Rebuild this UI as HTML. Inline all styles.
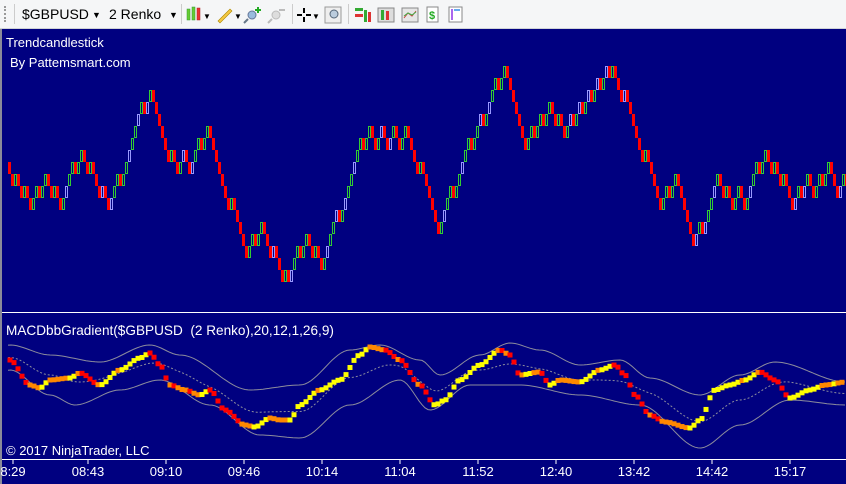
<!DOCTYPE html>
<html><head><meta charset="utf-8"><style>
html,body{margin:0;padding:0}
body{width:846px;height:484px;overflow:hidden;background:#000080;position:relative;font-family:"Liberation Sans",sans-serif}
#tb{position:absolute;left:0;top:0;width:846px;height:28px;background:#f5f6f7;border-bottom:1px solid #cfd3d8}
.t{position:absolute;font-size:14px;color:#000;top:6px}
.lbl{position:absolute;color:#fff;font-size:13px}
</style></head><body>
<div id="tb">
<div style="position:absolute;left:4px;top:6px;width:0;height:16px;border-left:2px dotted #999"></div>
<div style="position:absolute;left:14px;top:4px;width:1px;height:20px;background:#ccc"></div>
<div class="t" style="left:22px">$GBPUSD</div><div class="t" style="left:92px;font-size:9px;top:10px">▼</div>
<div class="t" style="left:109px">2 Renko</div><div class="t" style="left:169px;font-size:9px;top:10px">▼</div>
<div style="position:absolute;left:181px;top:4px;width:1px;height:20px;background:#ccc"></div>
<svg style="position:absolute;left:0;top:0" width="846" height="28">
<rect x="187" y="9" width="3" height="11" fill="#6c3" stroke="#393" stroke-width=".5"/><rect x="192" y="7" width="3" height="13" fill="#6c3" stroke="#393" stroke-width=".5"/><rect x="197" y="8" width="3" height="12" fill="#e33" stroke="#a22" stroke-width=".5"/>
<text x="203" y="19" font-size="8" font-family="Liberation Sans">▼</text>
<path d="M218 21 L230 9 L232 11 L220 23 Z" fill="#f5c842" stroke="#a80" stroke-width=".6"/>
<text x="234" y="19" font-size="8" font-family="Liberation Sans">▼</text>
<circle cx="252" cy="15" r="4" fill="#9bd" stroke="#679"/><path d="M248 19 l-4 4" stroke="#678" stroke-width="2"/><path d="M258 7v6M255 10h6" stroke="#2a2" stroke-width="2"/>
<circle cx="276" cy="15" r="4" fill="#ddd" stroke="#bbb"/><path d="M272 19 l-4 4" stroke="#bbb" stroke-width="2"/><path d="M279 10h6" stroke="#bbb" stroke-width="2"/>
<rect x="292" y="4" width="1" height="20" fill="#ccc"/>
<path d="M304 8v5M304 17v5M297 15h5M306 15h5" stroke="#000" stroke-width="2"/>
<text x="312" y="19" font-size="8" font-family="Liberation Sans">▼</text>
<rect x="325" y="7" width="16" height="16" fill="#eee" stroke="#999"/><circle cx="334" cy="14" r="4" fill="#bcd" stroke="#567"/>
<rect x="348" y="4" width="1" height="20" fill="#ccc"/>
<rect x="355" y="8" width="8" height="3" fill="#3a3"/><rect x="355" y="14" width="8" height="3" fill="#d33"/><rect x="364" y="10" width="3" height="12" fill="#3a3"/><rect x="368" y="12" width="3" height="10" fill="#d33"/>
<rect x="378" y="8" width="16" height="14" fill="#ddd" stroke="#888"/><rect x="381" y="10" width="3" height="10" fill="#3a3"/><rect x="386" y="11" width="3" height="9" fill="#d33"/>
<rect x="402" y="8" width="16" height="14" fill="#e6e6e6" stroke="#888"/><path d="M404 18l4-5 4 3 4-5" stroke="#c44" fill="none"/><path d="M404 16l4-3 4 2 4-3" stroke="#4a4" fill="none"/>
<rect x="427" y="7" width="11" height="15" fill="#fff" stroke="#888"/><text x="429" y="19" font-size="11" fill="#2a2" font-weight="bold" font-family="Liberation Sans">$</text>
<rect x="449" y="7" width="13" height="15" fill="#fff" stroke="#888"/><rect x="451" y="9" width="2" height="11" fill="#a6e"/><rect x="454" y="9" width="6" height="2" fill="#6ae"/>
</svg>
</div>
<div style="position:absolute;left:0;top:29px;width:2px;height:455px;background:#8a8a9a"></div>
<div class="lbl" style="left:6px;top:35px">Trendcandlestick</div>
<div class="lbl" style="left:10px;top:55px">By Pattemsmart.com</div>
<div style="position:absolute;left:2px;top:312px;width:844px;height:1px;background:#fff"></div>
<div class="lbl" style="left:6px;top:323px;font-size:13.6px">MACDbbGradient($GBPUSD&nbsp; (2 Renko),20,12,1,26,9)</div>
<div class="lbl" style="left:6px;top:443px">© 2017 NinjaTrader, LLC</div>
<div style="position:absolute;left:2px;top:459px;width:844px;height:1px;background:#fff"></div>
<svg id="c" style="position:absolute;left:0;top:0" width="846" height="484"></svg>
<script>
function interp(pts,x){for(var i=0;i<pts.length-1;i++){if(x<=pts[i+1][0]){var a=pts[i],b=pts[i+1];var u=(x-a[0])/(b[0]-a[0]);u=u*u*(3-2*u);return a[1]+(b[1]-a[1])*u;}}return pts[pts.length-1][1];}
var P=[[8,165],[20,200],[30,205],[45,165],[55,195],[75,155],[100,200],[120,170],[135,100],[150,100],[165,165],[185,160],[205,130],[215,165],[230,215],[245,260],[260,235],[270,265],[285,285],[300,240],[320,255],[335,210],[355,135],[380,130],[400,135],[415,170],[435,235],[450,180],[470,130],[495,80],[500,75],[510,110],[525,150],[540,105],[555,130],[570,130],[580,100],[600,80],[608,62],[620,100],[635,150],[660,210],[675,180],[690,250],[700,225],[715,160],[730,200],[745,190],[760,155],[780,185],[790,225],[805,175],[815,200],[825,165],[835,200],[846,170]];
var s='';var p=162,prevUp=false,run=0;
for(var x=8;x<846;x+=3){var t=interp(P,x);var up;
if(t<p-8)up=true;else if(t>p+8)up=false;else{up=run>=2?!prevUp:prevUp;}
if(up===prevUp)run++;else run=1;
if(up){var c=(x%9<3)?'#99f':'#3c3';s+='<rect x="'+(x+.5)+'" y="'+(p-11.5)+'" width="2" height="11" fill="none" stroke="'+c+'"/>';p-=12;}
else{s+='<rect x="'+x+'" y="'+p+'" width="3" height="12" fill="#f00"/>';p+=12;}
prevUp=up;}
var D=[[10,360],[30,385],[40,388],[50,380],[70,378],[80,373],[100,385],[120,370],[140,358],[150,353],[160,365],[170,385],[185,390],[200,395],[210,390],[225,410],[245,425],[255,427],[270,418],[280,420],[290,420],[300,405],[320,390],[340,380],[360,355],[370,347],[385,350],[400,360],[420,385],[435,405],[445,400],[460,380],[480,365],[500,350],[510,355],[520,375],[540,372],[550,385],[560,380],[580,382],[600,370],[615,365],[625,375],[635,395],[650,415],[665,422],[690,428],[700,420],[715,390],[730,385],[745,380],[760,372],[775,380],[790,398],[810,390],[825,385],[846,382]];
var U=[[10,345],[50,355],[100,362],[150,345],[180,355],[250,390],[300,385],[350,350],[380,345],[420,360],[440,375],[480,355],[510,343],[540,350],[580,365],[620,360],[650,378],[700,395],[740,375],[775,362],[846,382]];
var L=[[10,370],[50,395],[75,405],[120,390],[160,380],[210,405],[260,435],[300,438],[350,405],[400,380],[430,410],[470,385],[520,385],[580,395],[640,405],[700,448],[740,425],[790,400],[846,405]];
function line(A){var d='';for(var x=8;x<=846;x+=3){d+=(d?'L':'M')+x+' '+interp(A,x).toFixed(1);}return '<path d="'+d+'" fill="none" stroke="#8c8c9c" stroke-width="1"/>';}
s+=line(U)+line(L);
var d='';for(var x=8;x<=846;x+=3){d+=(d?'L':'M')+x+' '+((interp(U,x)+interp(L,x))/2).toFixed(1);}s+='<path d="'+d+'" fill="none" stroke="#8c8c9c" stroke-dasharray="2,2"/>';
for(var x=10;x<846;x+=4){var y=interp(D,x),y2=interp(D,x+4),dy=y2-y;var c=dy<-0.8?'#ff0':(dy>1.8?'#f00':'#f80');s+='<rect x="'+(x-2.5)+'" y="'+(y-2.5)+'" width="5" height="5" fill="'+c+'"/>';}
var T=[[13,'8:29'],[88,'08:43'],[166,'09:10'],[244,'09:46'],[322,'10:14'],[400,'11:04'],[478,'11:52'],[556,'12:40'],[634,'13:42'],[712,'14:42'],[790,'15:17']];
T.forEach(function(a){s+='<rect x="'+(a[0]-.5)+'" y="460" width="1" height="4" fill="#fff"/><text x="'+a[0]+'" y="476" fill="#fff" font-size="13" text-anchor="middle" font-family="Liberation Sans">'+a[1]+'</text>';});
document.getElementById('c').innerHTML=s;
</script>
</body></html>
